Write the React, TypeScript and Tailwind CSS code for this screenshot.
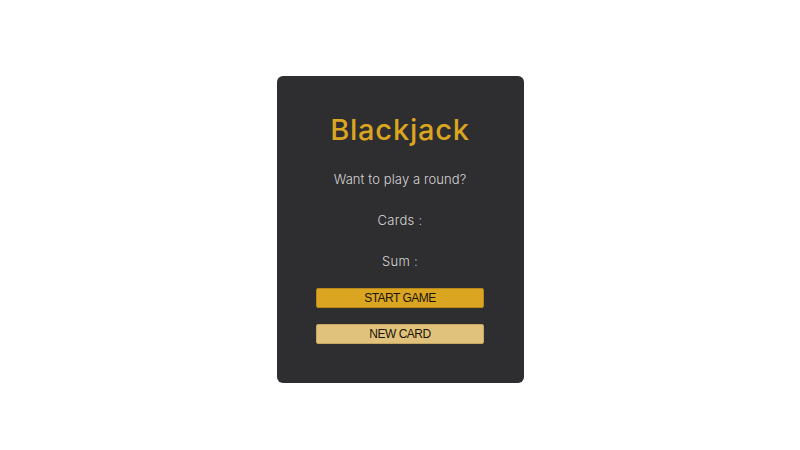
export default function App() {
  return (
    <div className="min-h-[450px] w-full bg-white flex justify-center pt-[76px]">
      <div className="w-[247px] h-[307px] rounded-[6px] bg-[#2e2d2f] flex flex-col items-center pt-[36px] font-['Inter',sans-serif]">
        <h1 className="text-[29px] leading-[35px] font-medium text-[#daa520] tracking-[0.8px]">Blackjack</h1>
        <p className="mt-[22px] text-[13px] leading-[20px] font-light text-[#d6d6d6] tracking-[0.1px]">Want to play a round?</p>
        <p className="mt-[21px] text-[13px] leading-[20px] font-light text-[#d6d6d6] tracking-[0.3px]">Cards :</p>
        <p className="mt-[21px] text-[13px] leading-[20px] font-light text-[#d6d6d6] tracking-[0.3px]">Sum :</p>
        <button className="mt-[17px] w-[168px] h-[20px] rounded-[2px] bg-[#daa520] border border-[#b8891a] text-[12px] leading-none tracking-[-0.5px] text-[#1a1408] font-['Liberation_Sans',Arial,sans-serif]">
          START GAME
        </button>
        <button className="mt-[16px] w-[168px] h-[20px] rounded-[2px] bg-[#e1c27c] border border-[#c6a762] text-[12px] leading-none tracking-[-0.5px] text-[#1a1408] font-['Liberation_Sans',Arial,sans-serif]">
          NEW CARD
        </button>
      </div>
    </div>
  );
}
